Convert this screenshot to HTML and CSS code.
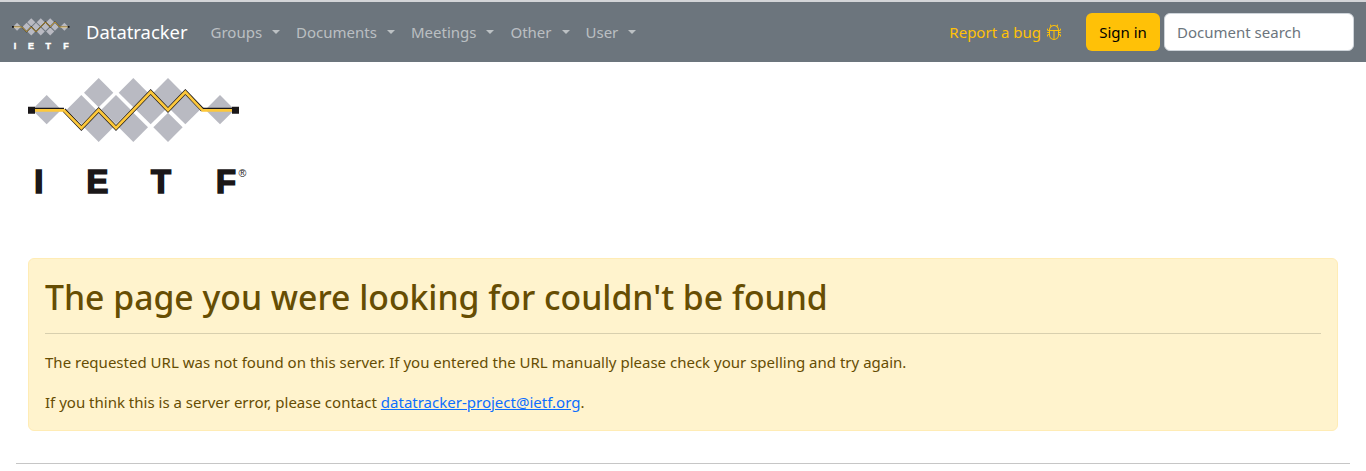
FILE: index.html
```html
<!DOCTYPE html>
<html lang="en">
<head>
<meta charset="utf-8">
<title>Datatracker</title>
<link rel="stylesheet" href="styles.css">
</head>
<body>
<nav class="navbar">
  <a class="brand" href="#">
    <svg class="brand-logo" viewBox="84 36 660 384">
      <g fill="#b9bac2">
        <path d="M140 99l44 44-44 44-44-44z"/>
        <path d="M244 99l44 44-44 44-44-44z"/>
        <path d="M296 48l44 44-44 44-44-44z"/>
        <path d="M296 152l44 44-44 44-44-44z"/>
        <path d="M348 99l44 44-44 44-44-44z"/>
        <path d="M400 48l44 44-44 44-44-44z"/>
        <path d="M400 152l44 44-44 44-44-44z"/>
        <path d="M452 99l44 44-44 44-44-44z"/>
        <path d="M504 48l44 44-44 44-44-44z"/>
        <path d="M504 152l44 44-44 44-44-44z"/>
        <path d="M556 99l44 44-44 44-44-44z"/>
        <path d="M660 99l44 44-44 44-44-44z"/>
      </g>
      <path d="M192 144L244 198 296 144 348 198 452 90 504 144 556 90 608 144" fill="none" stroke="#1a1718" stroke-width="12"/>
      <path d="M105 140H192M608 140H696" fill="none" stroke="#1a1718" stroke-width="5"/>
      <path d="M84 134h21v21H84zM696 134h21v21h-21z" fill="#1a1718"/>
      <path d="M105 145H192L244 198 296 144 348 198 452 90 504 144 556 90 608 145H696" fill="none" stroke="#fdc83b" stroke-width="8"/>
      <g class="logo-letters">
        <text x="116" y="392" text-anchor="middle">I</text>
        <text x="292" y="392" text-anchor="middle">E</text>
        <text x="483" y="392" text-anchor="middle">T</text>
        <text x="678" y="392" text-anchor="middle">F</text>
      </g>
    </svg>
    <span>Datatracker</span>
  </a>
  <ul class="nav-list">
    <li><a class="nav-link" href="#">Groups</a></li>
    <li><a class="nav-link" href="#">Documents</a></li>
    <li><a class="nav-link" href="#">Meetings</a></li>
    <li><a class="nav-link" href="#">Other</a></li>
    <li><a class="nav-link" href="#">User</a></li>
  </ul>
  <a class="report" href="#">Report a bug
    <svg class="bug" viewBox="0 0 16 16" fill="currentColor"><path d="M4.355.522a.5.5 0 0 1 .623.333l.291.956A4.979 4.979 0 0 1 8 1c1.007 0 1.946.298 2.731.811l.29-.956a.5.5 0 1 1 .957.29l-.41 1.352A4.985 4.985 0 0 1 13 6h.5a.5.5 0 0 0 .5-.5V5a.5.5 0 0 1 1 0v.5A1.5 1.5 0 0 1 13.5 7H13v1h1.5a.5.5 0 0 1 0 1H13v1h.5a1.5 1.5 0 0 1 1.5 1.5v.5a.5.5 0 1 1-1 0v-.5a.5.5 0 0 0-.5-.5H13a5 5 0 0 1-10 0h-.5a.5.5 0 0 0-.5.5v.5a.5.5 0 1 1-1 0v-.5A1.5 1.5 0 0 1 2.5 10H3V9H1.5a.5.5 0 0 1 0-1H3V7h-.5A1.5 1.5 0 0 1 1 5.5V5a.5.5 0 0 1 1 0v.5a.5.5 0 0 0 .5.5H3c0-1.364.547-2.601 1.432-3.503l-.41-1.352a.5.5 0 0 1 .333-.623zM4 7v4a4 4 0 0 0 3.5 3.97V7H4zm4.5 0v7.97A4 4 0 0 0 12 11V7H8.5zM12 6a3.989 3.989 0 0 0-1.334-2.982A3.983 3.983 0 0 0 8 2a3.983 3.983 0 0 0-2.667 1.018A3.989 3.989 0 0 0 4 6h8z"/></svg>
  </a>
  <a class="signin" href="#">Sign in</a>
  <input class="search" type="text" placeholder="Document search">
</nav>
<main class="content">
  <svg class="page-logo" viewBox="84 36 660 384">
    <g fill="#b9bac2">
      <path d="M140 99l44 44-44 44-44-44z"/>
      <path d="M244 99l44 44-44 44-44-44z"/>
      <path d="M296 48l44 44-44 44-44-44z"/>
      <path d="M296 152l44 44-44 44-44-44z"/>
      <path d="M348 99l44 44-44 44-44-44z"/>
      <path d="M400 48l44 44-44 44-44-44z"/>
      <path d="M400 152l44 44-44 44-44-44z"/>
      <path d="M452 99l44 44-44 44-44-44z"/>
      <path d="M504 48l44 44-44 44-44-44z"/>
      <path d="M504 152l44 44-44 44-44-44z"/>
      <path d="M556 99l44 44-44 44-44-44z"/>
      <path d="M660 99l44 44-44 44-44-44z"/>
    </g>
    <path d="M192 144L244 198 296 144 348 198 452 90 504 144 556 90 608 144" fill="none" stroke="#1a1718" stroke-width="12"/>
    <path d="M105 140H192M608 140H696" fill="none" stroke="#1a1718" stroke-width="5"/>
    <path d="M84 134h21v21H84zM696 134h21v21h-21z" fill="#1a1718"/>
    <path d="M105 145H192L244 198 296 144 348 198 452 90 504 144 556 90 608 145H696" fill="none" stroke="#fdc83b" stroke-width="8"/>
    <g class="logo-letters">
      <text x="116" y="392" text-anchor="middle">I</text>
      <text x="292" y="392" text-anchor="middle">E</text>
      <text x="483" y="392" text-anchor="middle">T</text>
      <text x="678" y="392" text-anchor="middle">F</text>
      <text class="logo-mark" x="727" y="345" text-anchor="middle">®</text>
    </g>
  </svg>
  <section class="alert">
    <h1 class="alert-title">The page you were looking for couldn't be found</h1>
    <hr class="alert-rule">
    <p class="alert-text">The requested URL was not found on this server. If you entered the URL manually please check your spelling and try again.</p>
    <p class="alert-text">If you think this is a server error, please contact <a class="alert-link" href="#">datatracker-project@ietf.org</a>.</p>
  </section>
  <hr class="footer-rule">
</main>
</body>
</html>
```
FILE: styles.css
```css
* { box-sizing: border-box; }
html, body { height: 100%; }
body {
  margin: 0;
  overflow: hidden;
  background: #fff;
  color: #212529;
  font-family: "Noto Sans", "Open Sans", sans-serif;
  font-size: 15px;
  line-height: 24px;
}
.logo-letters {
  font-family: "Liberation Sans", Arial, sans-serif;
  font-size: 98px;
  font-weight: 700;
  fill: #1a1718;
  stroke: #1a1718;
  stroke-width: 5px;
}
.logo-mark { font-size: 32px; font-weight: 400; stroke-width: 0; }

.navbar {
  display: flex;
  align-items: center;
  height: 62px;
  padding: 0 12px;
  background: #6c757d;
  border-top: 2px solid #d3d5d8;
  background-clip: padding-box;
}
.brand {
  display: flex;
  align-items: center;
  gap: 14px;
  color: #fff;
  text-decoration: none;
  font-size: 18.4px;
}
.brand-logo { display: block; width: 60px; height: 35px; margin-top: 5px; }
.brand-logo .logo-letters { fill: #fff; stroke: #fff; }
.nav-list {
  display: flex;
  flex: 1;
  margin: 0 0 0 15px;
  padding: 0;
  list-style: none;
}
.nav-link {
  display: flex;
  align-items: center;
  padding: 8px;
  color: rgba(255, 255, 255, .55);
  text-decoration: none;
}
.nav-link::after {
  content: "";
  margin-left: 10px;
  border-top: 4px solid;
  border-left: 4px solid transparent;
  border-right: 4px solid transparent;
}
.report {
  display: flex;
  align-items: center;
  gap: 5px;
  margin-right: 24px;
  color: #ffc107;
  text-decoration: none;
}
.bug { width: 16px; height: 16px; }
.signin {
  width: 74px;
  height: 38px;
  margin-right: 4px;
  border-radius: 6px;
  background: #ffc107;
  color: #000;
  text-align: center;
  line-height: 38px;
  text-decoration: none;
}
.search {
  width: 190px;
  height: 38px;
  padding: 6px 12px;
  border: 1px solid #ced4da;
  border-radius: 6px;
  background: #fff;
  font: inherit;
}
.search::placeholder { color: #6c757d; opacity: 1; }

.content { padding: 12px 16px 0; }
.page-logo { display: block; width: 220px; height: 128px; margin-left: 12px; }
.alert {
  margin: 56px 12px 0;
  padding: 16px;
  height: 173px;
  border: 1px solid #ffecb5;
  border-radius: 6px;
  background: #fff3cd;
  color: #664d03;
}
.alert-title {
  margin: 0 0 14px;
  font-size: 33.74px;
  font-weight: 500;
  line-height: 44px;
}
.alert-rule {
  margin: 0 0 16px;
  border: 0;
  border-top: 1px solid #d8cfae;
}
.alert-text { margin: 0 0 16px; font-size: 15.03px; }
.alert-link { color: #0d6efd; }
.footer-rule {
  margin: 32px 0 0;
  border: 0;
  border-top: 1px solid #c6c6c6;
}
```
